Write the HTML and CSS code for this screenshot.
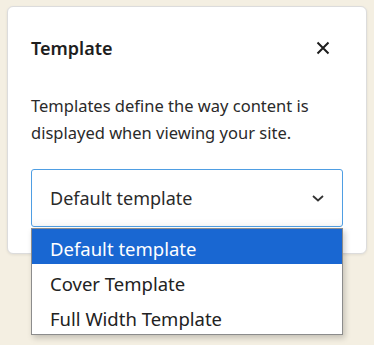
FILE: index.html
```html
<!DOCTYPE html>
<html lang="en">
<head>
  <meta charset="UTF-8">
  <meta name="viewport" content="width=device-width, initial-scale=1.0">
  <title>Template</title>
  <link rel="stylesheet" href="styles.css">
</head>
<body>
  <div class="panel">
    <div class="panel-header">
      <h2 class="panel-title">Template</h2>
      <button class="close-btn" aria-label="Close">
        <svg width="14" height="14" viewBox="0 0 14 14">
          <path d="M1.5 1.5 L12.5 12.5 M12.5 1.5 L1.5 12.5" stroke="#1e1e1e" stroke-width="2" fill="none"/>
        </svg>
      </button>
    </div>
    <p class="panel-text">Templates define the way content is displayed when viewing your site.</p>
    <div class="select-wrap">
      <div class="select-box">
        <span>Default template</span>
        <svg class="chevron" width="12" height="7" viewBox="0 0 12 7">
          <path d="M1 1 L6 5.5 L11 1" stroke="#333" stroke-width="1.8" fill="none"/>
        </svg>
      </div>
      <ul class="options">
        <li class="option selected">Default template</li>
        <li class="option">Cover Template</li>
        <li class="option">Full Width Template</li>
      </ul>
    </div>
  </div>
</body>
</html>
```

FILE: styles.css
```css
* {
  margin: 0;
  padding: 0;
  box-sizing: border-box;
}
html {
  height: 100%;
}
body {
  min-height: 100%;
  background: #f4efe2;
  font-family: "Noto Sans", "Open Sans", sans-serif;
  color: #1e1e1e;
  padding: 6px 7px;
}
.panel {
  width: 360px;
  background: #fff;
  border: 1px solid #dcdcdc;
  border-radius: 6px;
  box-shadow: 0 1px 3px rgba(0,0,0,0.08);
  padding: 26px 23px 26px;
}
.panel-header {
  display: flex;
  justify-content: space-between;
  align-items: center;
  height: 30px;
}
.panel-title {
  font-size: 18px;
  font-weight: 600;
  color: #1e1e1e;
}
.close-btn {
  background: none;
  border: none;
  width: 30px;
  height: 30px;
  margin-right: 5px;
  display: flex;
  align-items: center;
  justify-content: center;
  cursor: pointer;
}
.panel-text {
  margin-top: 29px;
  font-size: 16.5px;
  line-height: 27px;
  color: #2a2a2a;
}
.select-wrap {
  position: relative;
  margin-top: 23px;
}
.select-box {
  height: 58px;
  border: 1px solid #4f9ee3;
  border-radius: 3px;
  display: flex;
  align-items: center;
  justify-content: space-between;
  padding: 0 18px 0 18px;
  font-size: 18px;
  color: #2a2a2a;
  box-shadow: inset 0 -6px 8px -6px rgba(0,0,0,0.08);
}
.options {
  list-style: none;
  position: absolute;
  top: 59px;
  left: 0;
  right: 0;
  background: #fff;
  border: 1px solid #8c8c8c;
  box-shadow: 2px 3px 6px rgba(0,0,0,0.2);
  z-index: 10;
}
.option {
  height: 35px;
  padding: 4px 0 0 18px;
  line-height: 31px;
  font-size: 18.5px;
  color: #222;
}
.option.selected {
  background: #1967d2;
  color: #fff;
}
```
